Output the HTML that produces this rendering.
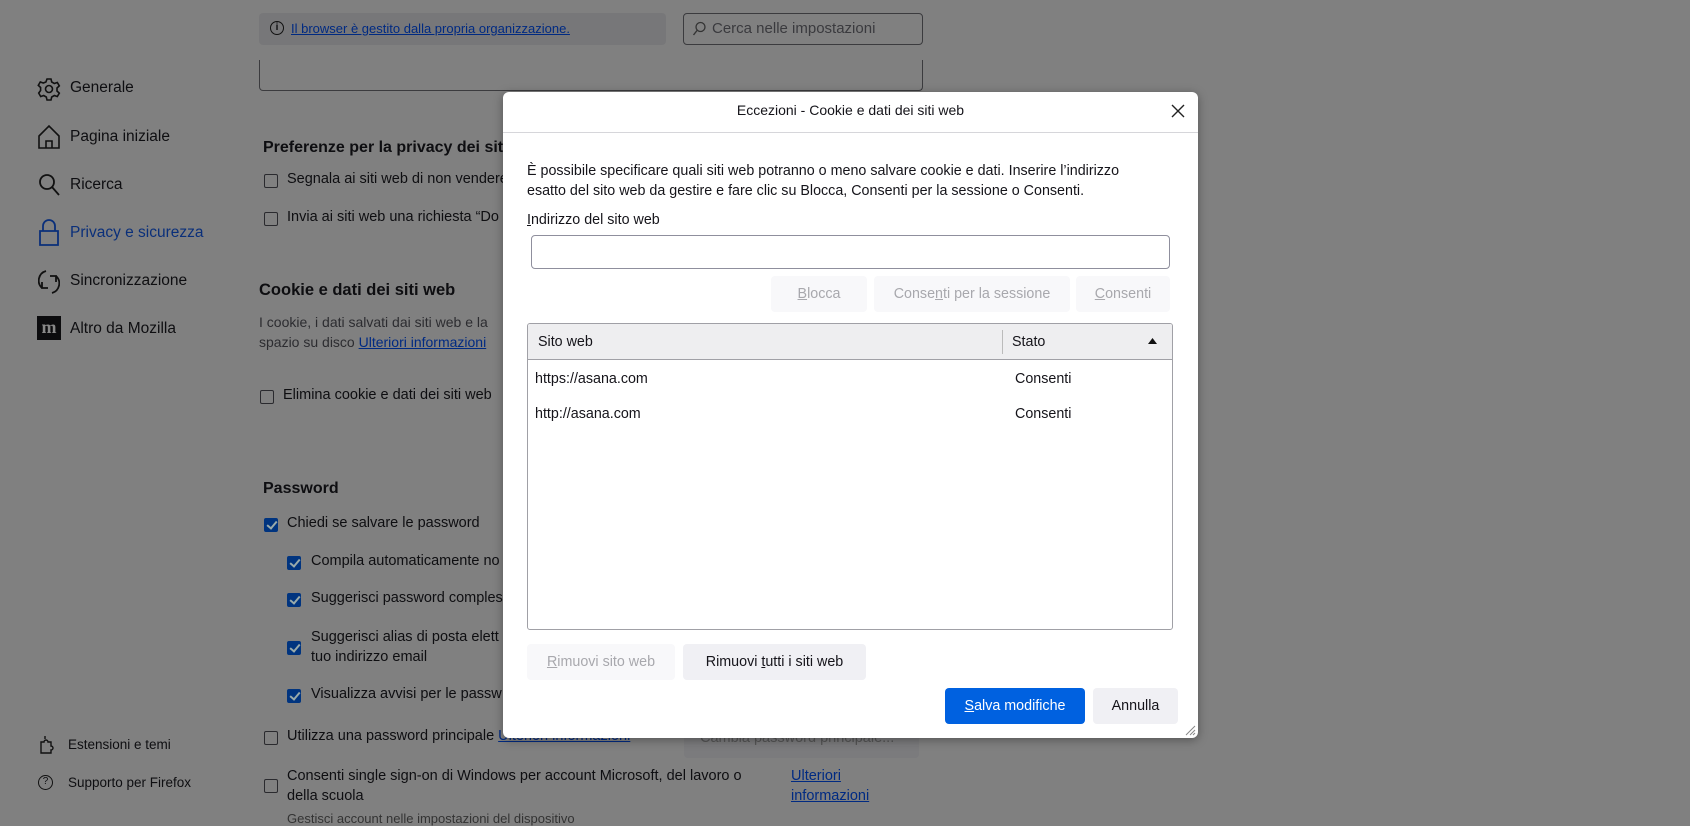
<!DOCTYPE html>
<html><head><meta charset="utf-8"><style>
*{box-sizing:border-box;margin:0;padding:0}
body{width:1690px;height:824px;overflow:hidden;background:#808080;font-family:"Liberation Sans",sans-serif;color:#0e0e11;position:relative;font-size:14px}
.a{position:absolute;white-space:nowrap}
.lk{color:#002a82;text-decoration:underline}
.cb{position:absolute;width:14px;height:14px;border:1.5px solid #2a2a2e;border-radius:2px}
.cb.on{background:#00347f;border-color:#00347f}
.cb.on:after{content:"";position:absolute;left:3.5px;top:0px;width:4px;height:8px;border:solid #9aa;border-width:0 2px 2px 0;transform:rotate(40deg)}
.nav{position:absolute;left:70px;font-size:15.5px}
.dlg{position:absolute;left:503px;top:92px;width:695px;height:646px;background:#fff;border-radius:6px;box-shadow:0 2px 10px rgba(0,0,0,.35);font-size:14.3px;color:#15141a}
.btn{position:absolute;background:#f0f0f4;border-radius:4px;text-align:center;font-size:14.3px;line-height:36px;height:36px;white-space:nowrap}
.dis{background:#f8f8fa;color:#a8a8ad}
</style></head><body>
<div class="a" style="left:259px;top:13px;width:407px;height:32px;background:#777779;border-radius:4px"></div>
<div class="a" style="left:270px;top:21px;width:14px;height:14px;border:1.5px solid #111;border-radius:50%;font-size:10px;line-height:11px;text-align:center;font-weight:bold">i</div>
<div class="a lk" style="left:291px;top:21px;font-size:13px">Il browser è gestito dalla propria organizzazione.</div>
<div class="a" style="left:683px;top:13px;width:240px;height:32px;border:1px solid #3b3b3e;border-radius:4px"></div>
<svg class="a" style="left:692px;top:21px" width="14" height="16"><circle cx="8.5" cy="6" r="4.5" fill="none" stroke="#333" stroke-width="1.3"/><path d="M5 9.5L1.5 14" stroke="#333" stroke-width="1.4"/></svg>
<div class="a" style="left:712px;top:20px;font-size:15px;color:#3a3a3e">Cerca nelle impostazioni</div>
<div class="a" style="left:259px;top:60px;width:664px;height:31px;border:1px solid #3b3b3e;border-top:none;border-radius:0 0 4px 4px"></div>

<svg class="a" style="left:37px;top:77px" width="24" height="24" fill="none" stroke="#111" stroke-width="1.6"><circle cx="12" cy="12" r="3.5"/><path d="M10 2h4l.7 3 2.6 1.5 3-1 2 3.4-2.3 2.1v3l2.3 2.1-2 3.4-3-1-2.6 1.5-.7 3h-4l-.7-3-2.6-1.5-3 1-2-3.4L3.6 13.5v-3L1.3 8.4l2-3.4 3 1L8.9 5z"/></svg>
<div class="nav" style="top:79px">Generale</div>
<svg class="a" style="left:37px;top:124px" width="24" height="26" fill="none" stroke="#111" stroke-width="1.6"><path d="M2 12L12 2l10 10v12H2z M9 24v-7h6v7"/></svg>
<div class="nav" style="top:128px">Pagina iniziale</div>
<svg class="a" style="left:37px;top:172px" width="24" height="26" fill="none" stroke="#111" stroke-width="1.8"><circle cx="10" cy="10" r="7"/><path d="M15 15l7 8"/></svg>
<div class="nav" style="top:176px">Ricerca</div>
<svg class="a" style="left:38px;top:219px" width="22" height="28" fill="none" stroke="#0a2f7a" stroke-width="1.8"><path d="M5 12V7a6 6 0 0112 0v5 M2 12h18v14H2z"/></svg>
<div class="nav" style="top:224px;color:#0a2f7a">Privacy e sicurezza</div>
<svg class="a" style="left:38px;top:268px" width="22" height="28" fill="none" stroke="#111" stroke-width="1.8"><path d="M8 3A10 10 0 004 20 M14 25A10 10 0 0018 8 M4 14v6h6 M18 14V8h-6"/></svg>
<div class="nav" style="top:272px">Sincronizzazione</div>
<div class="a" style="left:37px;top:316px;width:24px;height:24px;background:#0c0c0e;color:#888;font:bold 18px 'Liberation Serif',serif;text-align:center;line-height:22px">m</div>
<div class="nav" style="top:320px">Altro da Mozilla</div>

<svg class="a" style="left:39px;top:734px" width="16" height="20" fill="none" stroke="#111" stroke-width="1.4"><path d="M2 8h3a2 2 0 114 0h3v4a2 2 0 110 4v3H2z M6 2v3"/></svg>
<div class="a" style="left:68px;top:737px;font-size:13.5px">Estensioni e temi</div>
<div class="a" style="left:38px;top:775px;width:15px;height:15px;border:1.5px solid #111;border-radius:50%;font-size:10px;text-align:center;line-height:12px">?</div>
<div class="a" style="left:68px;top:775px;font-size:13.5px">Supporto per Firefox</div>

<div class="a" style="left:263px;top:139px;font-size:16px;font-weight:bold">Preferenze per la privacy dei siti web</div>
<div class="cb" style="left:264px;top:174px"></div><div class="a" style="left:287px;top:171px;font-size:14.5px">Segnala ai siti web di non vendere</div>
<div class="cb" style="left:264px;top:212px"></div><div class="a" style="left:287px;top:209px;font-size:14.5px">Invia ai siti web una richiesta “Do</div>
<div class="a" style="left:259px;top:281px;font-size:16.5px;font-weight:bold">Cookie e dati dei siti web</div>
<div class="a" style="left:259px;top:314px;font-size:14px;color:#2c2c30">I cookie, i dati salvati dai siti web e la</div>
<div class="a" style="left:259px;top:334px;font-size:14px;color:#2c2c30">spazio su disco <span class="lk">Ulteriori informazioni</span></div>
<div class="cb" style="left:260px;top:390px"></div><div class="a" style="left:283px;top:387px;font-size:14.5px">Elimina cookie e dati dei siti web</div>
<div class="a" style="left:263px;top:480px;font-size:16px;font-weight:bold">Password</div>
<div class="cb on" style="left:264px;top:518px"></div><div class="a" style="left:287px;top:515px;font-size:14.5px">Chiedi se salvare le password</div>
<div class="cb on" style="left:287px;top:556px"></div><div class="a" style="left:311px;top:553px;font-size:14.5px">Compila automaticamente no</div>
<div class="cb on" style="left:287px;top:593px"></div><div class="a" style="left:311px;top:590px;font-size:14.5px">Suggerisci password comples</div>
<div class="cb on" style="left:287px;top:641px"></div><div class="a" style="left:311px;top:627px;font-size:14.5px;line-height:20px">Suggerisci alias di posta elett<br>tuo indirizzo email</div>
<div class="cb on" style="left:287px;top:689px"></div><div class="a" style="left:311px;top:686px;font-size:14.5px">Visualizza avvisi per le passw</div>
<div class="cb" style="left:264px;top:731px"></div><div class="a" style="left:287px;top:728px;font-size:14.5px">Utilizza una password principale <span class="lk">Ulteriori informazioni</span></div>
<div class="a" style="left:684px;top:724px;width:235px;height:34px;background:#7b7b7d;border-radius:4px"></div>
<div class="a" style="left:700px;top:730px;font-size:14.5px;color:#555">Cambia password principale...</div>
<div class="cb" style="left:264px;top:779px"></div><div class="a" style="left:287px;top:766px;font-size:14.5px;line-height:20px">Consenti single sign-on di Windows per account Microsoft, del lavoro o<br>della scuola</div>
<div class="a lk" style="left:791px;top:766px;font-size:14.5px;line-height:20px">Ulteriori<br>informazioni</div>
<div class="a" style="left:287px;top:811px;font-size:13px;color:#333">Gestisci account nelle impostazioni del dispositivo</div>

<div class="dlg">
<div class="a" style="left:0;width:695px;top:10px;text-align:center;font-size:14px">Eccezioni - Cookie e dati dei siti web</div>
<svg class="a" style="left:668px;top:12px" width="14" height="14" stroke="#222" stroke-width="1.4"><path d="M1 1l12 12M13 1L1 13"/></svg>
<div class="a" style="left:0;top:40px;width:695px;height:1px;background:#d6d6da"></div>
<div class="a" style="left:24px;top:69px;line-height:20px">È possibile specificare quali siti web potranno o meno salvare cookie e dati. Inserire l’indirizzo<br>esatto del sito web da gestire e fare clic su Blocca, Consenti per la sessione o Consenti.</div>
<div class="a" style="left:24px;top:120px"><u>I</u>ndirizzo del sito web</div>
<div class="a" style="left:28px;top:143px;width:639px;height:34px;border:1px solid #8f8f9d;border-radius:4px"></div>
<div class="btn dis" style="left:268px;top:184px;width:96px"><u>B</u>locca</div>
<div class="btn dis" style="left:371px;top:184px;width:196px">Conse<u>n</u>ti per la sessione</div>
<div class="btn dis" style="left:573px;top:184px;width:94px"><u>C</u>onsenti</div>
<div class="a" style="left:24px;top:231px;width:646px;height:307px;border:1px solid #a0a0a6;border-radius:3px;overflow:hidden">
 <div class="a" style="left:0;top:0;width:646px;height:36px;background:#eeeef0;border-bottom:1px solid #a0a0a6"></div>
 <div class="a" style="left:10px;top:10px;font-size:14.3px">Sito web</div>
 <div class="a" style="left:474px;top:6px;width:1px;height:24px;background:#bbb"></div>
 <div class="a" style="left:484px;top:10px;font-size:14.3px">Stato</div>
 <svg class="a" style="left:620px;top:14px" width="9" height="6"><path d="M0 6L4.5 0 9 6z" fill="#111"/></svg>
 <div class="a" style="left:7px;top:47px">https://asana.com</div>
 <div class="a" style="left:487px;top:47px">Consenti</div>
 <div class="a" style="left:7px;top:82px">http://asana.com</div>
 <div class="a" style="left:487px;top:82px">Consenti</div>
</div>
<div class="btn dis" style="left:24px;top:552px;width:148px"><u>R</u>imuovi sito web</div>
<div class="btn" style="left:180px;top:552px;width:183px">Rimuovi <u>t</u>utti i siti web</div>
<div class="btn" style="left:442px;top:596px;width:140px;background:#0061e0;color:#fff"><u>S</u>alva modifiche</div>
<div class="btn" style="left:590px;top:596px;width:85px">Annulla</div>
<svg class="a" style="left:681px;top:632px" width="12" height="12" stroke="#888"><path d="M11 2L2 11M11 6L6 11M11 9L9 11"/></svg>
</div>
</body></html>
